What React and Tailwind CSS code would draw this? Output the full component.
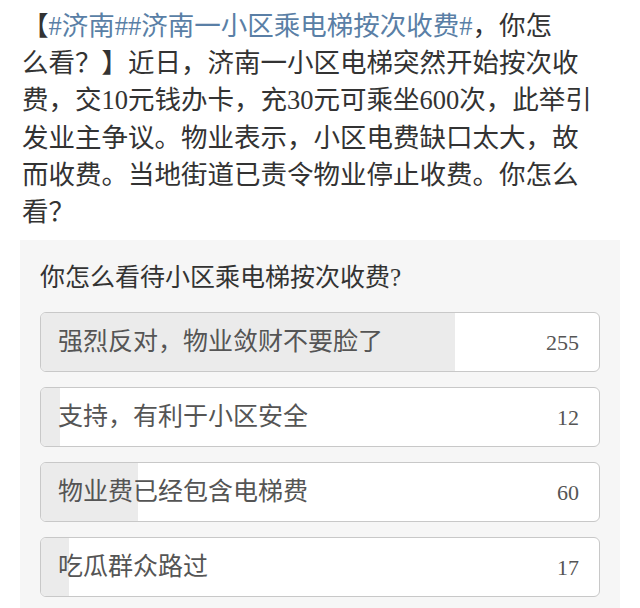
const OPTIONS = [
  { label: '强烈反对，物业敛财不要脸了', count: 255 },
  { label: '支持，有利于小区安全', count: 12 },
  { label: '物业费已经包含电梯费', count: 60 },
  { label: '吃瓜群众路过', count: 17 },
]

const FONT = { fontFamily: '"Liberation Serif", "Noto Sans CJK SC", serif' }

export default function App() {
  const total = OPTIONS.reduce((s, o) => s + o.count, 0)

  return (
    <div className="w-[640px] h-[608px] bg-white overflow-hidden" style={FONT}>
      <div className="pl-[22px] pt-[8px] text-[26.5px] leading-[37.2px] text-[#333] whitespace-nowrap">
        <div>【<span className="text-[#5a7fa6]">#济南##济南一小区乘电梯按次收费#</span>，你怎</div>
        <div>么看？】近日，济南一小区电梯突然开始按次收</div>
        <div>费，交10元钱办卡，充30元可乘坐600次，此举引</div>
        <div>发业主争议。物业表示，小区电费缺口太大，故</div>
        <div>而收费。当地街道已责令物业停止收费。你怎么</div>
        <div>看？</div>
      </div>

      <div className="mx-[20px] mt-[9px] bg-[#f6f6f6] px-[20px] pt-[21px] pb-[12px]">
        <h2 className="text-[25px] leading-[34px] text-[#333] mb-[17px]">你怎么看待小区乘电梯按次收费?</h2>
        <div className="flex flex-col gap-[15px]">
          {OPTIONS.map(o => (
            <div key={o.label} className="relative h-[60px] rounded-[6px] border border-[#c8c8c8] bg-white overflow-hidden">
              <div className="absolute inset-y-0 left-0 bg-[#ebebeb]" style={{ width: `${(o.count / total) * 100}%` }} />
              <div className="relative flex items-center justify-between h-full pl-[17px] pr-[20px]">
                <span className="text-[25px] text-[#555]">{o.label}</span>
                <span className="text-[22px] text-[#555]">{o.count}</span>
              </div>
            </div>
          ))}
        </div>
      </div>
    </div>
  )
}
